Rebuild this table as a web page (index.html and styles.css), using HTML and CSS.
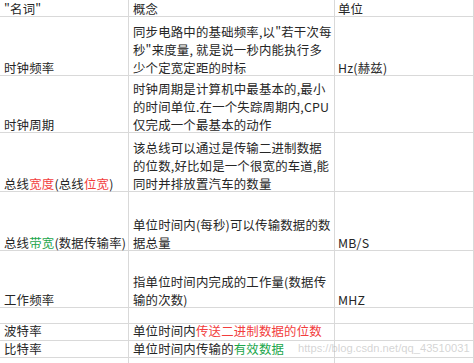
FILE: index.html
```html
<!DOCTYPE html>
<html lang="zh-CN">
<head>
<meta charset="utf-8">
<title>表</title>
<link rel="stylesheet" href="styles.css">
</head>
<body>
<div class="sheet">
  <div class="cell"><span>"名词"</span></div>
  <div class="cell"><span>概念</span></div>
  <div class="cell"><span>单位</span></div>

  <div class="cell"><span>时钟频率</span></div>
  <div class="cell"><span>同步电路中的基础频率,以"若干次每<br>秒"来度量, 就是说一秒内能执行多<br>少个定宽定距的时标</span></div>
  <div class="cell"><span>Hz(赫兹)</span></div>

  <div class="cell"><span>时钟周期</span></div>
  <div class="cell"><span>时钟周期是计算机中最基本的,最小<br>的时间单位.在一个失踪周期内,CPU<br>仅完成一个最基本的动作</span></div>
  <div class="cell"></div>

  <div class="cell"><span>总线<em class="red">宽度</em>(总线<em class="red">位宽</em>)</span></div>
  <div class="cell"><span>该总线可以通过是传输二进制数据<br>的位数,好比如是一个很宽的车道,能<br>同时并排放置汽车的数量</span></div>
  <div class="cell"></div>

  <div class="cell"><span>总线<em class="green">带宽</em>(数据传输率)</span></div>
  <div class="cell"><span>单位时间内(每秒)可以传输数据的数<br>据总量</span></div>
  <div class="cell"><span>MB/S</span></div>

  <div class="cell"><span>工作频率</span></div>
  <div class="cell"><span>指单位时间内完成的工作量(数据传<br>输的次数)</span></div>
  <div class="cell"><span>MHZ</span></div>

  <div class="cell"></div>
  <div class="cell"></div>
  <div class="cell"></div>

  <div class="cell short"><span>波特率</span></div>
  <div class="cell short"><span>单位时间内<em class="red">传送二进制数据的位数</em></span></div>
  <div class="cell short"></div>

  <div class="cell low"><span>比特率</span></div>
  <div class="cell low"><span>单位时间内传输的<em class="green">有效数据</em></span></div>
  <div class="cell low"></div>

  <div class="cell"></div>
  <div class="cell"></div>
  <div class="cell"></div>

  <div class="watermark">https://blog.csdn.net/qq_43510031</div>
</div>
</body>
</html>
```

FILE: styles.css
```css
html, body {
  margin: 0;
  padding: 0;
  background: #ffffff;
}

.sheet {
  position: relative;
  width: 474px;
  height: 363px;
  overflow: hidden;
  display: grid;
  grid-template-columns: 129px 206px 1fr;
  grid-template-rows: 17px 59px 57px 59px 59px 57px 16px 17px 17px 20px;
  font-family: "Noto Sans CJK SC", "Noto Sans", sans-serif;
  font-size: 12.4px;
  letter-spacing: 0.2px;
  line-height: 18px;
  color: #262626;
}

.cell {
  box-sizing: border-box;
  border-right: 1px solid #d9d9d9;
  border-bottom: 1px solid #d9d9d9;
  padding: 0 3px 0 4px;
  display: flex;
  flex-direction: column;
  justify-content: flex-end;
  white-space: nowrap;
}

.cell span {
  display: block;
  margin-bottom: -2px;
}

.cell.short span {
  margin-bottom: 0;
}

.cell.low span {
  margin-bottom: -1px;
}

.cell:nth-child(3n) {
  padding-left: 3px;
}

em {
  font-style: normal;
}

.red {
  color: #f23d3d;
}

.green {
  color: #1ba64b;
}

.watermark {
  position: absolute;
  left: 298px;
  top: 340px;
  font-family: "Liberation Sans", Arial, sans-serif;
  font-size: 11.2px;
  letter-spacing: 0;
  line-height: 16px;
  color: rgba(170, 170, 170, 0.5);
  white-space: nowrap;
}
```
